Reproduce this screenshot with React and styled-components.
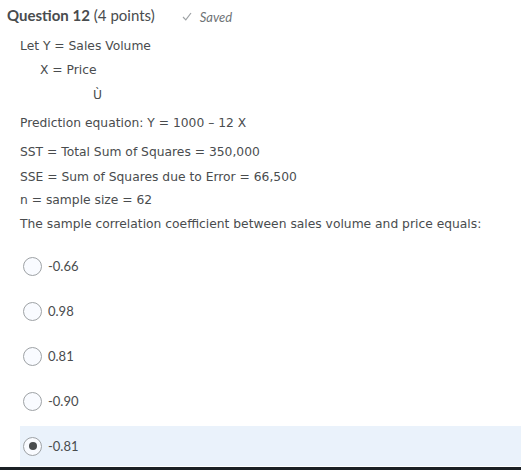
import React from "react";
import styled, { createGlobalStyle } from "styled-components";

const Global = createGlobalStyle`
  html, body { margin: 0; padding: 0; background: #fff; }
  body { width: 521px; height: 470px; overflow: hidden; }
`;

const Page = styled.div`
  width: 521px;
  height: 470px;
  display: flex;
  flex-direction: column;
  background: #fff;
  overflow: hidden;
`;

const Header = styled.div`
  display: flex;
  align-items: baseline;
  padding: 6px 0 0 7px;
  height: 24px;
  font-family: Lato, "Open Sans", sans-serif;
  color: #494c4e;
`;

const Title = styled.span`
  font-size: 15px;
  font-weight: 700;
`;

const Points = styled.span`
  font-size: 15px;
  margin-left: 4px;
`;

const Saved = styled.span`
  margin-left: 27px;
  font-size: 13px;
  font-style: italic;
  color: #6e7376;
  display: inline-flex;
  align-items: center;
  gap: 8px;
`;

const Body = styled.div`
  padding: 4px 0 0 20px;
  font-family: "DejaVu Sans", Verdana, sans-serif;
  font-size: 12.3px;
  color: #494c4e;
`;

const Line = styled.div`
  height: ${(p) => p.h || 23}px;
  line-height: ${(p) => p.h || 23}px;
  padding-left: ${(p) => p.indent || 0}px;
  white-space: nowrap;
`;

const Options = styled.div`
  display: flex;
  flex-direction: column;
  gap: 5px;
  padding-left: 20px;
  margin-top: 9px;
`;

const Option = styled.label`
  display: flex;
  align-items: center;
  gap: 6px;
  height: 40px;
  padding-left: 3px;
  background: ${(p) => (p.$selected ? "#eaf2fb" : "transparent")};
  font-family: Lato, "Open Sans", sans-serif;
  font-size: 13px;
  color: #494c4e;
`;

const Radio = styled.span`
  width: 17px;
  height: 17px;
  border-radius: 50%;
  border: 1px solid #9ea2a5;
  background: #f9fbff;
  display: flex;
  align-items: center;
  justify-content: center;
  flex: none;
  &::after {
    content: "";
    width: 8px;
    height: 8px;
    border-radius: 50%;
    background: ${(p) => (p.$checked ? "#494c4e" : "transparent")};
  }
`;

const Footer = styled.div`
  margin-top: auto;
  height: 3px;
  flex: none;
  background: #1b2025;
`;

const options = ["-0.66", "0.98", "0.81", "-0.90", "-0.81"];

export default function App() {
  return (
    <Page>
      <Global />
      <Header>
        <Title>Question 12</Title>
        <Points>(4 points)</Points>
        <Saved>
          <svg width="10" height="9" viewBox="0 0 10 9">
            <path d="M1 5 L3.8 7.8 L9 1" fill="none" stroke="#9ea2a5" strokeWidth="1.2" />
          </svg>
          Saved
        </Saved>
      </Header>
      <Body>
        <Line h={24}>Let Y = Sales Volume</Line>
        <Line h={24} indent={20}>X = Price</Line>
        <Line h={27} indent={73}>Ù</Line>
        <Line h={29}>Prediction equation: Y = 1000 – 12 X</Line>
        <Line h={28}>SST = Total Sum of Squares = 350,000</Line>
        <Line h={23}>SSE = Sum of Squares due to Error = 66,500</Line>
        <Line h={23}>n = sample size = 62</Line>
        <Line h={25}>The sample correlation coefficient between sales volume and price equals:</Line>
      </Body>
      <Options>
        {options.map((o, i) => (
          <Option key={o} $selected={i === 4}>
            <Radio $checked={i === 4} />
            {o}
          </Option>
        ))}
      </Options>
      <Footer />
    </Page>
  );
}
